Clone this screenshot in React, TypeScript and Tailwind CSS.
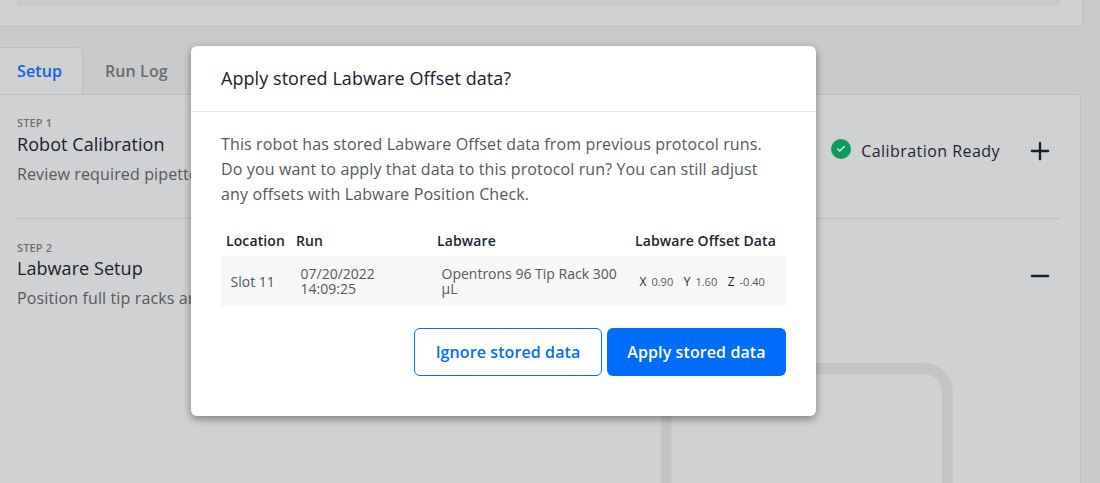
import { Check, Minus, Plus } from 'lucide-react';

function StepHeader({ step, title, text, titleClass }: { step: string; title: string; text: string; titleClass?: string }) {
  return (
    <div>
      <p className="text-[11px] leading-[14px] font-semibold tracking-[0.15px] text-[#6f7072] uppercase">{step}</p>
      <h3 className={`text-[18px] leading-[26px] font-medium tracking-[0.06px] text-[#16212d] ${titleClass ?? ''}`}>{title}</h3>
      <p className="mt-[6px] text-[16px] leading-[22px] tracking-[0.13px] whitespace-nowrap text-[#55585c]">{text}</p>
    </div>
  );
}

export default function App() {
  return (
    <div
      className="relative h-[483px] w-[1100px] overflow-hidden bg-[#c9cacc]"
      style={{ fontFamily: '"Open Sans", sans-serif' }}
    >
      {/* Panel above, cut off by the window */}
      <div className="h-[27px] w-[1083px] rounded-br border-r border-b border-[#bdbec0] bg-[#d0d1d3] pl-[17px]">
        <div className="h-[6px] w-[1043px] bg-[#c9cacc]" />
      </div>

      {/* Tabs */}
      <div className="mt-[20px] flex h-[47px] items-start">
        <div className="flex h-[47px] w-[83px] items-center rounded-tr border-t border-r border-[#bdbec0] bg-[#d0d1d3] pl-[17px] text-[16px] font-semibold tracking-[0.1px] text-[#0f63d8]">
          Setup
        </div>
        <div className="flex h-[47px] items-center pl-[22px] text-[16px] font-semibold tracking-[0.1px] text-[#6a6b6e]">
          Run Log
        </div>
      </div>

      {/* Steps */}
      <div className="h-[401px] w-[1081px] rounded-tr border-t border-r border-[#bdbec0] bg-[#d0d1d3] pt-[21px] pr-[20px] pl-[17px]">
        <div className="flex h-[103px] items-start justify-between border-b border-[#bdbec0]">
          <StepHeader step="Step 1" title="Robot Calibration" text="Review required pipettes" titleClass="mt-[1px]" />
          <div className="mt-[21px] mr-[6px] flex items-center">
            <span className="mb-[4px] flex h-[20px] w-[20px] items-center justify-center rounded-full bg-[#0d9a5f]">
              <Check className="h-[10px] w-[10px] text-[#e8e8e8]" strokeWidth={3.5} />
            </span>
            <span className="ml-[10px] text-[16px] font-medium tracking-[0.45px] text-[#1d2430]">
              Calibration Ready
            </span>
            <Plus className="ml-[26px] h-[28px] w-[28px] text-[#16212d]" strokeWidth={2} />
          </div>
        </div>
        <div className="flex items-start justify-between pt-[22px]">
          <StepHeader step="Step 2" title="Labware Setup" text="Position full tip racks and" />
          <Minus className="mt-[21px] mr-[6px] h-[28px] w-[28px] text-[#16212d]" strokeWidth={2} />
        </div>
        <svg className="mt-[54px] ml-[644px]" width="292" height="140" viewBox="0 0 292 140" fill="none">
          <path d="M5 140V29.5a24 24 0 0 1 24-24h233.5a24 24 0 0 1 24 24V140" stroke="#c3c4c6" strokeWidth="11" />
        </svg>
      </div>

      {/* Modal */}
      <div className="absolute inset-0 pt-[46px] pl-[191px]">
        <div className="h-[370px] w-[625px] rounded-[6px] bg-white shadow-[0_3px_8px_rgba(0,0,0,0.4)]">
          <div className="flex h-[66px] items-center border-b border-[#e3e3e3] px-[30px] text-[18px] font-medium tracking-[0.06px] text-[#16212d]">
            Apply stored Labware Offset data?
          </div>
          <div className="px-[30px] pt-[20px]">
            <p className="text-[16px] leading-[25px] tracking-[0.13px] text-[#55585c]">
              This robot has stored Labware Offset data from previous protocol runs.
              <br />
              Do you want to apply that data to this protocol run? You can still adjust
              <br />
              any offsets with Labware Position Check.
            </p>
            <div className="mt-[24px] w-[565px]">
              <div className="grid h-[25px] grid-cols-[70px_141px_198px_1fr] items-start pl-[5px] text-[14px] leading-[20px] font-semibold tracking-[0.1px] text-[#1d2430]">
                <span>Location</span>
                <span>Run</span>
                <span>Labware</span>
                <span>Labware Offset Data</span>
              </div>
              <div className="grid h-[50px] grid-cols-[70px_141px_198px_1fr] items-center bg-[#f7f7f7] pl-[9.5px] text-[14px] leading-[15px] text-[#55585c]">
                <span>Slot 11</span>
                <span>
                  07/20/2022
                  <br />
                  14:09:25
                </span>
                <span>
                  Opentrons 96 Tip Rack 300
                  <br />
                  µL
                </span>
                <span className="flex items-center whitespace-nowrap text-[11px]">
                  <b className="mr-[5px] text-[12px] font-medium text-[#1d2430]">X</b>0.90
                  <b className="mr-[5px] ml-[10.5px] text-[12px] font-medium text-[#1d2430]">Y</b>1.60
                  <b className="mr-[5px] ml-[10.5px] text-[12px] font-medium text-[#1d2430]">Z</b>-0.40
                </span>
              </div>
            </div>
            <div className="mt-[22px] flex justify-end gap-[5px]">
              <button className="h-[48px] w-[188px] rounded-[6px] border border-[#006cfa] bg-white text-[16px] font-semibold tracking-[0.1px] text-[#006cfa]">
                Ignore stored data
              </button>
              <button className="h-[48px] w-[179px] rounded-[6px] bg-[#006cfa] text-[16px] font-semibold tracking-[0.1px] text-white">
                Apply stored data
              </button>
            </div>
          </div>
        </div>
      </div>
    </div>
  );
}
